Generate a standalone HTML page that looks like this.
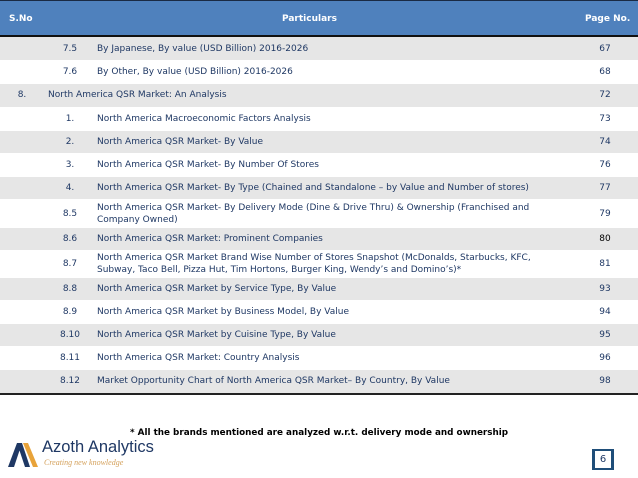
<!DOCTYPE html>
<html><head><meta charset="utf-8"><style>
*{margin:0;padding:0;box-sizing:border-box}
body{width:638px;height:478px;background:#fff;position:relative;overflow:hidden;font-family:"DejaVu Sans","Liberation Sans",sans-serif;color:#1f3864;font-size:9px}
.hdr{position:absolute;left:0;top:0;width:638px;height:37px;background:#4f81bd;border-top:1px solid #1a2a44;border-bottom:2px solid #111;color:#fff;font-weight:bold;font-size:9px}
.hdr span{position:absolute;top:13px}
.r{position:absolute;left:0;width:638px;border-bottom:1px solid #fff}
.g{background:#e6e6e6}
.n{position:absolute;width:40px;text-align:center;left:50px}
.t{position:absolute;left:97px;line-height:12px}
.p{position:absolute;left:590px;width:30px;text-align:center}
</style></head><body>
<div class="hdr"><span style="left:9px">S.No</span><span style="left:282px">Particulars</span><span style="left:585px">Page No.</span></div>

<div class="r g" style="top:37px;height:24px"><span class="n" style="top:7px">7.5</span><span class="t" style="top:6px">By Japanese, By value (USD Billion) 2016-2026</span><span class="p" style="top:7px">67</span></div>
<div class="r" style="top:61px;height:23px"><span class="n" style="top:6px">7.6</span><span class="t" style="top:5px">By Other, By value (USD Billion) 2016-2026</span><span class="p" style="top:6px">68</span></div>
<div class="r g" style="top:84px;height:24px"><span class="n" style="top:6px;left:2px">8.</span><span class="t" style="top:5px;left:48px">North America QSR Market: An Analysis</span><span class="p" style="top:6px">72</span></div>
<div class="r" style="top:108px;height:23px"><span class="n" style="top:6px">1.</span><span class="t" style="top:5px">North America Macroeconomic Factors Analysis</span><span class="p" style="top:6px">73</span></div>
<div class="r g" style="top:131px;height:23px"><span class="n" style="top:6px">2.</span><span class="t" style="top:5px">North America QSR Market- By Value</span><span class="p" style="top:6px">74</span></div>
<div class="r" style="top:154px;height:23px"><span class="n" style="top:6px">3.</span><span class="t" style="top:5px">North America QSR Market- By Number Of Stores</span><span class="p" style="top:6px">76</span></div>
<div class="r g" style="top:177px;height:23px"><span class="n" style="top:6px">4.</span><span class="t" style="top:5px">North America QSR Market- By Type (Chained and Standalone – by Value and Number of stores)</span><span class="p" style="top:6px">77</span></div>
<div class="r" style="top:200px;height:28px"><span class="n" style="top:9px">8.5</span><span class="t" style="top:2px">North America QSR Market- By Delivery Mode (Dine &amp; Drive Thru) &amp; Ownership (Franchised and<br>Company Owned)</span><span class="p" style="top:9px">79</span></div>
<div class="r g" style="top:228px;height:23px"><span class="n" style="top:6px">8.6</span><span class="t" style="top:5px">North America QSR Market: Prominent Companies</span><span class="p" style="top:6px;color:#000">80</span></div>
<div class="r" style="top:251px;height:27px"><span class="n" style="top:8px">8.7</span><span class="t" style="top:1px">North America QSR Market Brand Wise Number of Stores Snapshot (McDonalds, Starbucks, KFC,<br>Subway, Taco Bell, Pizza Hut, Tim Hortons, Burger King, Wendy’s and Domino’s)*</span><span class="p" style="top:8px">81</span></div>
<div class="r g" style="top:278px;height:23px"><span class="n" style="top:6px">8.8</span><span class="t" style="top:5px">North America QSR Market by Service Type, By Value</span><span class="p" style="top:6px">93</span></div>
<div class="r" style="top:301px;height:23px"><span class="n" style="top:6px">8.9</span><span class="t" style="top:5px">North America QSR Market by Business Model, By Value</span><span class="p" style="top:6px">94</span></div>
<div class="r g" style="top:324px;height:23px"><span class="n" style="top:6px">8.10</span><span class="t" style="top:5px">North America QSR Market by Cuisine Type, By Value</span><span class="p" style="top:6px">95</span></div>
<div class="r" style="top:347px;height:23px"><span class="n" style="top:6px">8.11</span><span class="t" style="top:5px">North America QSR Market: Country Analysis</span><span class="p" style="top:6px">96</span></div>
<div class="r g" style="top:370px;height:23px;border-bottom:none"><span class="n" style="top:6px">8.12</span><span class="t" style="top:5px">Market Opportunity Chart of North America QSR Market– By Country, By Value</span><span class="p" style="top:6px">98</span></div>
<div style="position:absolute;left:0;top:393px;width:638px;height:2px;background:#222"></div>

<div style="position:absolute;left:130px;top:428px;font-weight:bold;color:#000;font-size:8.8px">* All the brands mentioned are analyzed w.r.t. delivery mode and ownership</div>

<svg style="position:absolute;left:8px;top:441px" width="30" height="26" viewBox="0 0 30 26">
<polygon points="0,26 9,2 14,2 6,26" fill="#1f3864"/>
<polygon points="9,2 14,2 22,26 17,26" fill="#1f3864"/>
<polygon points="15,2 20,2 30,26 25,26" fill="#e8a33a"/>
</svg>
<div style="position:absolute;left:42px;top:438px;font-family:'Liberation Sans',sans-serif;font-size:16.5px;color:#1f3864">Azoth Analytics</div>
<div style="position:absolute;left:44px;top:458px;font-family:'Liberation Serif',serif;font-style:italic;font-size:8px;color:#d4a05a">Creating new knowledge</div>

<div style="position:absolute;left:592px;top:449px;width:22px;height:21px;border:2px solid #1f4e79;border-left-width:3px;border-right-width:3px;color:#1f3864;font-size:10px;text-align:center;line-height:17px">6</div>
</body></html>
